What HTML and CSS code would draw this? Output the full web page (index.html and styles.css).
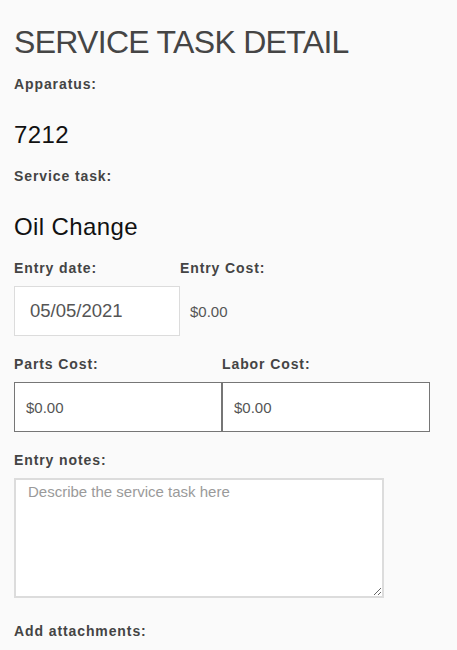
FILE: index.html
```html
<!DOCTYPE html>
<html lang="en">
<head>
<meta charset="utf-8">
<title>Service Task Detail</title>
<link rel="stylesheet" href="styles.css">
</head>
<body>
<main class="page">
  <h1 class="title">SERVICE TASK DETAIL</h1>

  <div class="label mt-16">Apparatus:</div>
  <p class="value">7212</p>

  <div class="label mt-19">Service task:</div>
  <p class="value">Oil Change</p>

  <div class="grid grid-date mt-19">
    <label class="label" for="entry-date">Entry date:</label>
    <div class="label">Entry Cost:</div>
    <input class="date-input" id="entry-date" type="text" value="05/05/2021">
    <div class="cost-text">$0.00</div>
  </div>

  <div class="grid grid-cost mt-20">
    <label class="label" for="parts">Parts Cost:</label>
    <label class="label" for="labor">Labor Cost:</label>
    <input class="cost-input" id="parts" type="text" value="$0.00">
    <input class="cost-input" id="labor" type="text" value="$0.00">
  </div>

  <label class="label block mt-20" for="notes">Entry notes:</label>
  <textarea class="notes" id="notes" placeholder="Describe the service task here"></textarea>

  <div class="label mt-25">Add attachments:</div>
</main>
</body>
</html>
```

FILE: styles.css
```css
html, body {
  margin: 0;
  padding: 0;
  background: #fafafa;
}

body {
  font-family: "Liberation Sans", Arial, sans-serif;
  color: #444;
}

.page {
  padding: 24px 14px 0 14px;
  display: flex;
  flex-direction: column;
  align-items: flex-start;
}

.title {
  margin: 0;
  font-size: 32px;
  line-height: 36px;
  font-weight: 400;
  letter-spacing: -0.7px;
  color: #454545;
}

.label {
  font-size: 14px;
  line-height: 16px;
  font-weight: 700;
  letter-spacing: 0.9px;
  color: #444;
}

.block { display: block; }

.mt-16 { margin-top: 16px; }
.mt-19 { margin-top: 19px; }
.mt-20 { margin-top: 20px; }
.mt-25 { margin-top: 25px; }

.value {
  margin: 29px 0 0 0;
  font-size: 24px;
  line-height: 28px;
  letter-spacing: 0.4px;
  color: #111;
}

.grid {
  display: grid;
  row-gap: 10px;
}

.grid-date {
  grid-template-columns: 166px auto;
}

.grid-cost {
  grid-template-columns: 208px 208px;
}

.date-input {
  box-sizing: border-box;
  width: 166px;
  height: 50px;
  margin: 0;
  padding: 0 15px;
  border: 1px solid #dcdcdc;
  background: #fff;
  font-family: "Liberation Sans", Arial, sans-serif;
  font-size: 18.5px;
  color: #555;
  outline: none;
}

.cost-text {
  align-self: center;
  padding-left: 10px;
  font-size: 15px;
  color: #555;
}

.cost-input {
  box-sizing: border-box;
  width: 208px;
  height: 50px;
  margin: 0;
  padding: 0 11px;
  border: 1px solid #767676;
  background: #fff;
  font-family: "Liberation Sans", Arial, sans-serif;
  font-size: 15px;
  color: #555;
  outline: none;
}

.notes {
  display: block;
  box-sizing: border-box;
  width: 370px;
  height: 120px;
  margin: 10px 0 0 0;
  padding: 3px 12px;
  border: 2px solid #dcdcdc;
  background: #fff;
  font-family: "Liberation Sans", Arial, sans-serif;
  font-size: 15px;
  color: #555;
  outline: none;
}

.notes::placeholder {
  color: #9a9a9a;
}
```
